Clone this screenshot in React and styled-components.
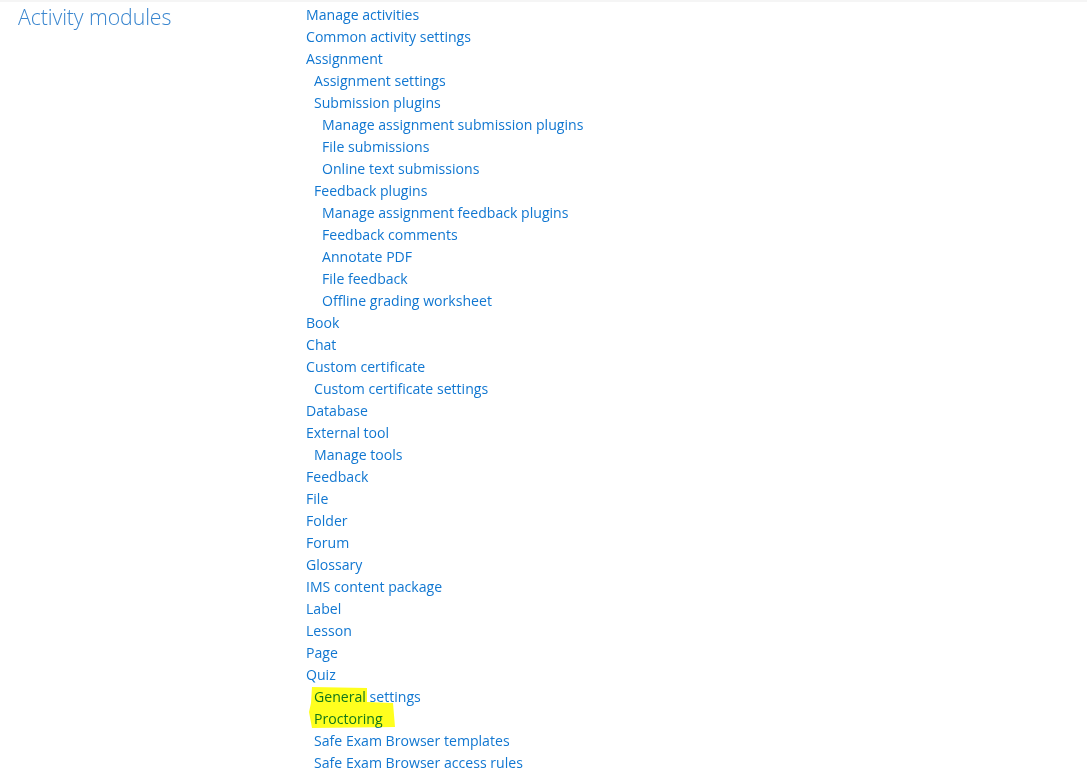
import React from "react";
import styled, { createGlobalStyle } from "styled-components";

const Global = createGlobalStyle`
  html, body { margin: 0; padding: 0; background: #fff; }
  body { font-family: "Open Sans", "Noto Sans", sans-serif; }
`;

const Page = styled.div`
  display: grid;
  grid-template-columns: 288px 1fr;
  padding: 0 0 0 18px;
  border-top: 2px solid #f5f5f5;
  min-height: 772px;
  overflow: hidden;
`;

const Heading = styled.h2`
  margin: 0;
  padding-top: 1px;
  font-family: "Open Sans", "Noto Sans", sans-serif;
  font-weight: 300;
  font-size: 21.3px;
  line-height: 28px;
  color: #3a86cf;
  letter-spacing: -0.1px;
`;

const List = styled.ul`
  list-style: none;
  margin: 0;
  padding: 1px 0 0 0;
  position: relative;
`;

const Item = styled.li`
  height: 22px;
  line-height: 22px;
  padding-left: ${(p) => p.$level * 8}px;
`;

const Link = styled.a`
  font-family: "Open Sans", "Noto Sans", sans-serif;
  font-size: 14.1px;
  color: #1177d1;
  text-decoration: none;
  white-space: nowrap;
`;

const Marker = styled.svg`
  position: absolute;
  left: 0;
  top: ${(p) => p.$top}px;
  width: 96px;
  height: 44px;
  mix-blend-mode: multiply;
  pointer-events: none;
`;

const items = [
  ["Manage activities", 0],
  ["Common activity settings", 0],
  ["Assignment", 0],
  ["Assignment settings", 1],
  ["Submission plugins", 1],
  ["Manage assignment submission plugins", 2],
  ["File submissions", 2],
  ["Online text submissions", 2],
  ["Feedback plugins", 1],
  ["Manage assignment feedback plugins", 2],
  ["Feedback comments", 2],
  ["Annotate PDF", 2],
  ["File feedback", 2],
  ["Offline grading worksheet", 2],
  ["Book", 0],
  ["Chat", 0],
  ["Custom certificate", 0],
  ["Custom certificate settings", 1],
  ["Database", 0],
  ["External tool", 0],
  ["Manage tools", 1],
  ["Feedback", 0],
  ["File", 0],
  ["Folder", 0],
  ["Forum", 0],
  ["Glossary", 0],
  ["IMS content package", 0],
  ["Label", 0],
  ["Lesson", 0],
  ["Page", 0],
  ["Quiz", 0],
  ["General settings", 1],
  ["Proctoring", 1],
  ["Safe Exam Browser templates", 1],
  ["Safe Exam Browser access rules", 1],
];

export default function App() {
  return (
    <>
      <Global />
      <Page>
        <Heading>Activity modules</Heading>
        <List>
          {items.map(([label, level]) => (
            <Item key={label} $level={level}>
              <Link href="#">{label}</Link>
            </Item>
          ))}
          <Marker $top={685} viewBox="0 0 96 44">
            <path
              d="M6 0 L61 1 L61 15 L87 16 L89 40 L6 41 L3 25 L5 16 Z"
              fill="#ffff1e"
            />
          </Marker>
        </List>
      </Page>
    </>
  );
}
